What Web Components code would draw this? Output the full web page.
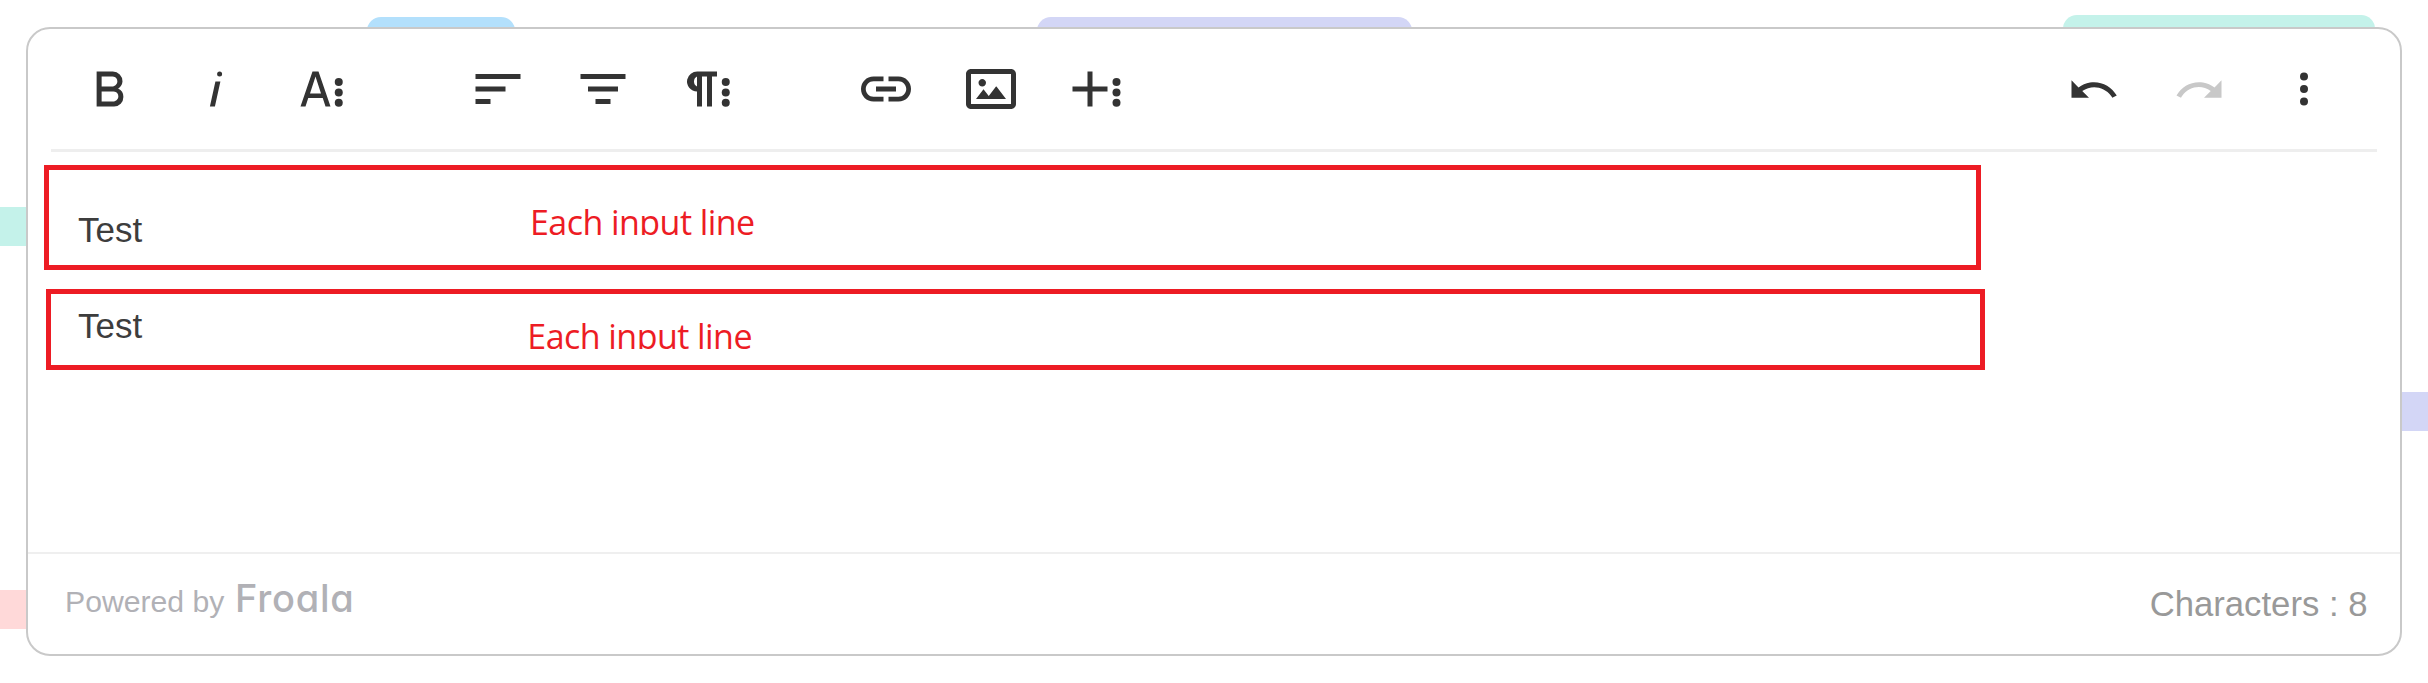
<!DOCTYPE html>
<html>
<head>
<meta charset="utf-8">
<title>Froala editor</title>
<style>
  html, body { margin: 0; background: #fff; }
  body { width: 2428px; height: 683px; overflow: hidden; position: relative; font-family: "Liberation Sans", Arial, sans-serif; }
</style>
</head>
<body>
<bg-chip style="left:367px;top:17px;width:148px;background:#b3e0fc"></bg-chip>
<bg-chip style="left:1037px;top:17px;width:375px;background:#d3d6f6"></bg-chip>
<bg-chip style="left:2063px;top:15px;width:312px;background:#c4f2ea"></bg-chip>
<bg-chip style="left:-20px;top:207px;width:60px;background:#c4f2ea" square></bg-chip>
<bg-chip style="left:-20px;top:590px;width:60px;background:#ffd9d9" square></bg-chip>
<bg-chip style="left:2390px;top:392px;width:60px;background:#d3d6f6" square></bg-chip>

<editor-frame>
  <tool-bar slot="toolbar">
    <tool-button icon="bold"></tool-button>
    <tool-button icon="italic" style="margin-left:46px"></tool-button>
    <tool-button icon="text" dots="21.5" style="margin-left:38.5px"></tool-button>

    <tool-button icon="alignLeft" style="margin-left:123.5px"></tool-button>
    <tool-button icon="alignCenter" style="margin-left:44.5px"></tool-button>
    <tool-button icon="paragraph" dots="21.5" style="margin-left:39.5px"></tool-button>

    <tool-button icon="link" style="margin-left:124px"></tool-button>
    <tool-button icon="image" style="margin-left:45px"></tool-button>
    <tool-button icon="plus" dots="22.6" style="margin-left:38.5px"></tool-button>

    <tool-button icon="undo" style="margin-left:auto"></tool-button>
    <tool-button icon="redo" disabled style="margin-left:45.5px"></tool-button>
    <tool-button icon="more" style="margin-left:45px"></tool-button>
  </tool-bar>

  <input-line note="Each input line" style="margin:13px 0 0 16px;width:1937px;height:105px;--text-top:42px;--text-left:29px;--note-left:481px;--note-top:31.8px"  slot="content">Test</input-line>
  <input-line note="Each input line" style="margin:19px 0 0 18px;width:1939px;height:81px;--text-top:14px;--text-left:27px;--note-left:476.3px;--note-top:22.3px" slot="content">Test</input-line>

  <editor-footer slot="footer" count="8"></editor-footer>
</editor-frame>

<script>
// icon paths on a 24 unit grid, same as the editor's toolbar
const ICONS = {
  bold: 'M15.25,11.8A3.68,3.68,0,0,0,17,9a3.93,3.93,0,0,0-3.86-4H6.65V19h7a3.74,3.74,0,0,0,3.7-3.78V15.1A3.64,3.64,0,0,0,15.25,11.8ZM8.65,7h4.2a2.09,2.09,0,0,1,2,1.3,2.09,2.09,0,0,1-1.37,2.61,2.23,2.23,0,0,1-.63.09H8.65Zm4.6,10H8.65V13h4.6a2.09,2.09,0,0,1,2,1.3,2.09,2.09,0,0,1-1.37,2.61A2.23,2.23,0,0,1,13.25,17Z',
  italic: 'M11.76,9h2l-2.2,10h-2Zm1.68-4a1,1,0,1,0,1,1,1,1,0,0,0-1-1Z',
  text: 'M11,5L6.2,19H8.2L9.3,15.6H15.1L16.2,19H18.2L13.4,5ZM10,13.8L12.2,7L14.4,13.8Z',
  alignLeft: 'M3,18h6v-2H3V18z M3,13h12v-2H3V13z M3,6v2h18V6H3z',
  alignCenter: 'M9,18h6v-2H9V18z M6,13h12v-2H6V13z M3,6v2h18V6H3z',
  paragraph: 'M10.15,5A4.11,4.11,0,0,0,6.08,8.18,4,4,0,0,0,10,13v6h2V7h2V19h2V7h2V5ZM10,11a2.2,2.2,0,0,1-1.2-2A2.2,2.2,0,0,1,10,7Z',
  link: 'M3.9,12c0-1.7,1.4-3.1,3.1-3.1h4V7H7c-2.8,0-5,2.2-5,5s2.2,5,5,5h4v-1.9H7C5.3,15.1,3.9,13.7,3.9,12z M8,13h8v-2H8V13z M17,7h-4v1.9h4c1.7,0,3.1,1.4,3.1,3.1s-1.4,3.1-3.1,3.1h-4V17h4c2.8,0,5-2.2,5-5S19.8,7,17,7z',
  image: 'M14.2,11l3.8,5H6l3-3.9l2.1,2.7L14,11H14.2z M8.5,11c0.8,0,1.5-0.7,1.5-1.5S9.3,8,8.5,8S7,8.7,7,9.5C7,10.3,7.7,11,8.5,11z M22,6v12c0,1.1-0.9,2-2,2H4c-1.1,0-2-0.9-2-2V6c0-1.1,0.9-2,2-2h16C21.1,4,22,4.9,22,6z M20,8.8V6H4v12h16V8.8z',
  plus: 'M19,13h-6v6h-2v-6H5v-2h6V5h2v6h6V13z',
  undo: 'M10.4,9.4c-1.7,0.3-3.2,0.9-4.6,2L3,8.5v7h7l-2.7-2.7c3.7-2.6,8.8-1.8,11.5,1.9c0.2,0.3,0.4,0.5,0.5,0.8l1.8-0.9C18.9,10.8,14.7,8.7,10.4,9.4z',
  redo: 'M13.6,9.4c1.7,0.3,3.2,0.9,4.6,2L21,8.5v7h-7l2.7-2.7C13,10.1,7.9,11,5.3,14.7c-0.2,0.3-0.4,0.5-0.5,0.8L3,14.6C5.1,10.8,9.3,8.7,13.6,9.4z',
  more: 'M13.6,7a1.6,1.6,0,1,1-1.6-1.6A1.6,1.6,0,0,1,13.6,7Zm0,5a1.6,1.6,0,1,1-1.6-1.6A1.6,1.6,0,0,1,13.6,12Zm0,5a1.6,1.6,0,1,1-1.6-1.6A1.6,1.6,0,0,1,13.6,17Z'
};

class BgChip extends HTMLElement {
  constructor() {
    super();
    this.attachShadow({ mode: 'open' });
  }
  connectedCallback() {
    const radius = this.hasAttribute('square') ? '0' : '14px 14px 0 0';
    this.shadowRoot.innerHTML = `
      <style>
        :host { display: block; position: absolute; height: 38.5px; border-radius: ${radius}; }
      </style>`;
  }
}
customElements.define('bg-chip', BgChip);

class EditorFrame extends HTMLElement {
  constructor() {
    super();
    this.attachShadow({ mode: 'open' });
  }
  connectedCallback() {
    this.shadowRoot.innerHTML = `
      <style>
        :host {
          display: flex; flex-direction: column; position: relative; box-sizing: border-box;
          margin: 27px 0 0 26px; width: 2375.5px; height: 629px;
          background: #fff; border: 2px solid #c9c9c9; border-radius: 24px;
        }
        .content { height: 400px; display: flex; flex-direction: column; }
      </style>
      <slot name="toolbar"></slot>
      <div class="content"><slot name="content"></slot></div>
      <slot name="footer"></slot>`;
  }
}
customElements.define('editor-frame', EditorFrame);

class ToolBar extends HTMLElement {
  constructor() {
    super();
    this.attachShadow({ mode: 'open' });
  }
  connectedCallback() {
    this.shadowRoot.innerHTML = `
      <style>
        :host { display: block; }
        .row { display: flex; box-sizing: border-box; height: 120px; padding: 30px 65.5px 0 52px; }
        .line { height: 3px; margin: 0 23px; background: #eee; }
      </style>
      <div class="row"><slot></slot></div>
      <div class="line"></div>`;
  }
}
customElements.define('tool-bar', ToolBar);

class ToolButton extends HTMLElement {
  constructor() {
    super();
    this.attachShadow({ mode: 'open' });
  }
  connectedCallback() {
    const color = this.hasAttribute('disabled') ? '#c8c8c8' : '#333';
    const dotsX = this.getAttribute('dots');
    // the three small dots of a dropdown button
    const dots = dotsX ? [9.2, 13.4, 17.5].map(y => `<circle cx="${dotsX}" cy="${y}" r="1.6"/>`).join('') : '';
    this.shadowRoot.innerHTML = `
      <style>
        :host { display: block; flex: none; width: 60px; height: 60px; }
        svg { display: block; width: 60px; height: 60px; fill: ${color}; overflow: visible; }
      </style>
      <svg viewBox="0 0 24 24"><path d="${ICONS[this.getAttribute('icon')]}"/>${dots}</svg>`;
  }
}
customElements.define('tool-button', ToolButton);

class InputLine extends HTMLElement {
  constructor() {
    super();
    this.attachShadow({ mode: 'open' });
  }
  connectedCallback() {
    this.shadowRoot.innerHTML = `
      <style>
        :host { display: block; flex: none; position: relative; box-sizing: border-box; border: 5px solid #ed1c24; }
        .text {
          padding: var(--text-top) 0 0 var(--text-left);
          font: 35px/36px "Liberation Sans", Arial, sans-serif; color: #3d3d3d;
        }
        .note {
          position: absolute; left: var(--note-left); top: var(--note-top);
          font: 34px/40px "Open Sans", sans-serif; letter-spacing: -.55px; color: #ed1c24; white-space: nowrap;
        }
        /* the annotation is hidden right under its baseline, same as in the capture */
        .note::after {
          content: ""; position: absolute; left: 0; right: 0; top: 33px; height: 14px; background: #fff;
        }
      </style>
      <div class="text"><slot></slot></div>
      <div class="note">${this.getAttribute('note')}</div>`;
  }
}
customElements.define('input-line', InputLine);

class EditorFooter extends HTMLElement {
  constructor() {
    super();
    this.attachShadow({ mode: 'open' });
  }
  connectedCallback() {
    this.shadowRoot.innerHTML = `
      <style>
        :host {
          display: flex; justify-content: space-between; align-items: flex-start; box-sizing: border-box;
          height: 102px; border-top: 2px solid #efefef; padding: 0 32px 0 37px;
          font-family: "Liberation Sans", Arial, sans-serif;
        }
        .brand { display: flex; align-items: baseline; gap: 10.5px; padding-top: 22px; color: #b1b1b6; font-size: 30.2px; line-height: 44px; }
        .logo { font: 500 38px/44px Inter, "Liberation Sans", sans-serif; font-feature-settings: "cv11"; letter-spacing: .8px; }
        .count { padding-top: 30px; color: #999; font-size: 34.7px; line-height: 40px; }
      </style>
      <div class="brand"><span>Powered by</span><span class="logo">Froala</span></div>
      <div class="count">Characters : ${this.getAttribute('count')}</div>`;
  }
}
customElements.define('editor-footer', EditorFooter);
</script>
</body>
</html>
